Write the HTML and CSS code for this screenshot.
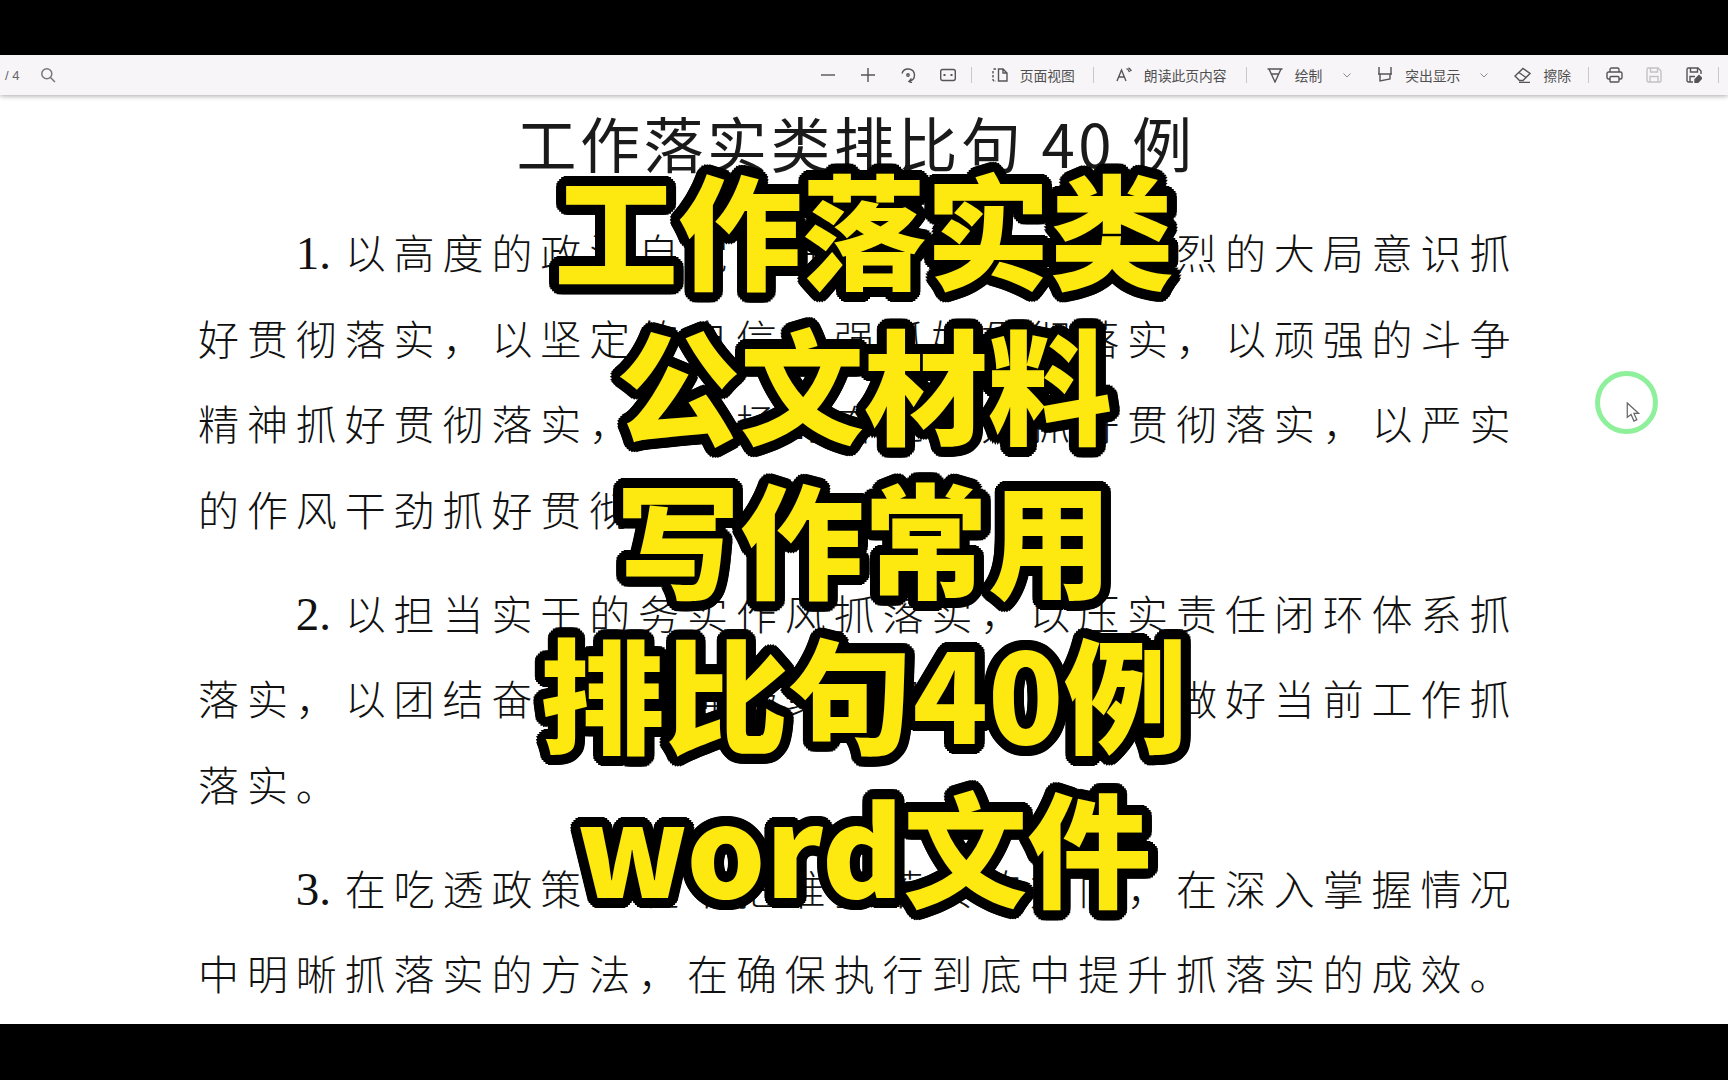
FILE: index.html
```html
<!DOCTYPE html>
<html lang="zh-CN">
<head>
<meta charset="utf-8">
<title>工作落实类排比句 40 例</title>
<link rel="stylesheet" href="styles.css">
</head>
<body>
<div class="frame">
  <div class="band-top"></div>
  <header class="toolbar">
    <div class="tool-left">
      <span class="pages">/ 4</span>
      <svg class="ic search" viewBox="0 0 16 16"><circle cx="6.8" cy="6.8" r="5"/><path d="M10.5 10.5 15 15"/></svg>
    </div>
    <div class="tool-right">
      <div class="zoomset">
        <svg class="ic" viewBox="0 0 16 16"><path d="M1 8h14"/></svg>
        <svg class="ic" viewBox="0 0 16 16"><path d="M1 8h14M8 1v14"/></svg>
        <svg class="ic" viewBox="0 0 16 16"><path d="M2 6.5A6.4 6.4 0 0 1 14.5 8a6.4 6.4 0 0 1-5 6.2"/><path d="M11.5 11.5 9 14.5l3 1.3"/><circle cx="8" cy="8" r="1.2"/></svg>
        <svg class="ic" viewBox="0 0 16 16"><rect x=".7" y="2.5" width="14.6" height="11" rx="2"/><path d="M3.500 8h2M10.500 8h2" stroke-width="2"/></svg>
      </div>
      <i class="sep s1"></i>
      <div class="tool view"><svg class="ic" viewBox="0 0 16 16"><path d="M4 2H2.500A1.500 1.500 0 0 0 1 3.500v9A1.500 1.500 0 0 0 2.500 14H4" stroke-dasharray="2.500 1.500"/><path d="M6.500 14V2h4.500l4 4v8zM11 2v4h4"/></svg><span>页面视图</span></div>
      <i class="sep s2"></i>
      <div class="tool read"><svg class="ic" viewBox="0 0 16 16"><path d="M1 14 5.500 3 10 14M2.800 10h5.400"/><path d="M10.500 1.500c1.500.8 2.500 2 3 3.500M12.500 .8c1.200.8 2.200 2 2.800 3.300"/></svg><span>朗读此页内容</span></div>
      <i class="sep s3"></i>
      <div class="tool draw"><svg class="ic" viewBox="0 0 16 16"><path d="M.5 2h15M2 2l6 13 6-13M4.500 7h7"/></svg><span>绘制</span></div>
      <svg class="chev c1" viewBox="0 0 8 5"><path d="M.5.5 4 4 7.500.5"/></svg>
      <div class="tool mark"><svg class="ic" viewBox="0 0 16 16"><path d="M2 0v7M14 0v7M1 7h14M3 7v7l10-2V7"/></svg><span>突出显示</span></div>
      <svg class="chev c2" viewBox="0 0 8 5"><path d="M.5.5 4 4 7.500.5"/></svg>
      <div class="tool erase"><svg class="ic wide" viewBox="0 0 17 16"><path d="M1 9 9 1.500l7 5-7 7H5.500zM5 5.500l7 5M5 15.500h11"/></svg><span>擦除</span></div>
      <i class="sep s4"></i>
      <svg class="ic wide print" viewBox="0 0 17 16"><path d="M4 5V2.500A1.500 1.500 0 0 1 5.500 1h6A1.500 1.500 0 0 1 13 2.500V5M4 12H2.500A1.500 1.500 0 0 1 1 10.500v-4A1.500 1.500 0 0 1 2.500 5h12A1.500 1.500 0 0 1 16 6.500v4a1.500 1.500 0 0 1-1.500 1.500H13"/><rect x="4" y="9.500" width="9" height="5.500" rx="1"/></svg>
      <svg class="ic save off" viewBox="0 0 16 16"><path d="M1 2.500A1.500 1.500 0 0 1 2.500 1H12l3 3v9.500a1.500 1.500 0 0 1-1.500 1.500h-11A1.500 1.500 0 0 1 1 13.500z"/><path d="M4.500 1v4h7V1M4 15V9.500h8V15"/></svg>
      <svg class="ic saveas" viewBox="0 0 16 16"><path d="M7 15H2.500A1.500 1.500 0 0 1 1 13.500v-11A1.500 1.500 0 0 1 2.500 1H12l3 3v3"/><path d="M4.500 1v4h7V1M4 15V9.500h5"/><path class="solid" d="M9 15.500v-3l4-4 2.800 2.800-4 4.200z"/></svg>
      <i class="sep s5"></i>
    </div>
  </header>
  <main class="doc">
    <h1 class="title">工作落实类排比句 40 例</h1>
    <section class="para">
      <div class="line first"><span class="num">1.</span>以高度的政治自觉抓好贯彻落实，以强烈的大局意识抓</div>
      <div class="line">好贯彻落实，以坚定的自信心强抓好贯彻落实，以顽强的斗争</div>
      <div class="line">精神抓好贯彻落实，以昂扬的奋进动力抓好贯彻落实，以严实</div>
      <div class="line">的作风干劲抓好贯彻落实。</div>
    </section>
    <section class="para">
      <div class="line first"><span class="num">2.</span>以担当实干的务实作风抓落实，以压实责任闭环体系抓</div>
      <div class="line">落实，以团结奋进的精神凝聚力量抓落实，以做好当前工作抓</div>
      <div class="line">落实。</div>
    </section>
    <section class="para">
      <div class="line first"><span class="num">3.</span>在吃透政策前提下把准抓落实的方向，在深入掌握情况</div>
      <div class="line">中明晰抓落实的方法，在确保执行到底中提升抓落实的成效。</div>
    </section>
  </main>
  <div class="band-bottom"></div>
  <div class="caption">
    <div>工作落实类</div>
    <div>公文材料</div>
    <div>写作常用</div>
    <div>排比句40例</div>
    <div>word文件</div>
  </div>
  <div class="pointer">
    <svg class="arrow" viewBox="0 0 14 22"><path d="M1 1v15l4-3 3 7 3-1.500-3-6.500h5z"/></svg>
  </div>
</div>
</body>
</html>
```

FILE: styles.css
```css
* { box-sizing: border-box; }
html, body { margin: 0; padding: 0; background: #000; }
.frame {
  position: relative;
  width: 1728px;
  height: 1080px;
  display: flex;
  flex-direction: column;
  overflow: hidden;
  font-family: "Noto Sans CJK SC", "Noto Sans", sans-serif;
}
.band-top { height: 55px; background: #000; flex: none; }
.band-bottom { height: 56px; background: #000; flex: none; }

.toolbar {
  position: relative;
  z-index: 2;
  flex: none;
  height: 40px;
  background: #f7f5f8;
  box-shadow: 0 1px 5px rgba(0,0,0,.35);
  display: flex;
  align-items: center;
  justify-content: space-between;
  color: #4f4f4f;
  font-size: 13.8px;
}
.tool-left { display: flex; align-items: center; padding-left: 5px; }
.pages { width: 35px; font-size: 13px; color: #666; font-family: "Liberation Sans", sans-serif; }
.tool-right { display: flex; align-items: center; padding-right: 9px; }
.ic {
  width: 16px; height: 16px; flex: none;
  fill: none; stroke: #555; stroke-width: 1.400;
}
.ic.wide { width: 17px; }
.ic .solid { fill: #555; }
.search { stroke: #777; stroke-width: 1.500; }
.zoomset { display: flex; gap: 24px; }
.sep { display: block; width: 1px; height: 16px; background: #c9c9cb; flex: none; }
.s1 { margin: 0 20px 0 15px; }
.s2 { margin: 0 22px 0 18px; }
.s3 { margin: 0 20px 0 19px; }
.s4 { margin: 0 17px 0 17px; }
.s5 { margin-left: 16px; }
.tool { display: flex; align-items: center; gap: 12px; white-space: nowrap; }
.chev { width: 8px; height: 5px; fill: none; stroke: #8a8a8a; stroke-width: 1; flex: none; }
.c1 { margin: 0 26px 0 21px; }
.c2 { margin: 0 26px 0 20px; }
.save { margin: 0 24px 0 23px; }
.save.off { stroke: #c2c2c4; }

.doc {
  flex: 1;
  min-height: 0;
  background: #fff;
  padding-top: 12px;
  color: #111;
  overflow: hidden;
}
.title {
  margin: 0 16px 32px 0;
  text-align: center;
  font-size: 60px;
  line-height: 70px;
  font-weight: 400;
  letter-spacing: 3.500px;
  color: #1a1a1a;
}
.para { margin: 0 0 18.500px 198px; width: 1330px; }
.line {
  height: 85.500px;
  line-height: 85.500px;
  font-size: 41px;
  font-weight: 300;
  letter-spacing: 7.900px;
  white-space: nowrap;
}
.line.first { padding-left: 97.800px; }
.num {
  display: inline-block;
  width: 48.900px;
  letter-spacing: 0;
  font-size: 47px;
  font-family: "Liberation Serif", serif;
}

.caption {
  position: absolute;
  z-index: 3;
  left: 0; right: 0; top: 149px;
  text-align: center;
  font-size: 124px;
  line-height: 154.500px;
  font-weight: 900;
  color: #fde810;
  white-space: nowrap;
  text-shadow:
    10px 0 #000, 9.660px 2.590px #000, 8.660px 5px #000, 7.070px 7.070px #000,
    5px 8.660px #000, 2.590px 9.660px #000, 0 10px #000, -2.590px 9.660px #000,
    -5px 8.660px #000, -7.070px 7.070px #000, -8.660px 5px #000, -9.660px 2.590px #000,
    -10px 0 #000, -9.660px -2.590px #000, -8.660px -5px #000, -7.070px -7.070px #000,
    -5px -8.660px #000, -2.590px -9.660px #000, 0 -10px #000, 2.590px -9.660px #000,
    5px -8.660px #000, 7.070px -7.070px #000, 8.660px -5px #000, 9.660px -2.590px #000,
    5px 0 #000, 3.540px 3.540px #000, 0 5px #000, -3.540px 3.540px #000,
    -5px 0 #000, -3.540px -3.540px #000, 0 -5px #000, 3.540px -3.540px #000;
}
.pointer {
  position: absolute;
  z-index: 2;
  left: 1595px; top: 371px;
  width: 63px; height: 63px;
  border: 5px solid #8ef09b;
  border-radius: 50%;
  filter: blur(.6px);
}
.arrow {
  position: absolute;
  left: 26px; top: 26px;
  width: 14px; height: 21px;
  fill: #fff; stroke: #666; stroke-width: 1.300;
}
```
